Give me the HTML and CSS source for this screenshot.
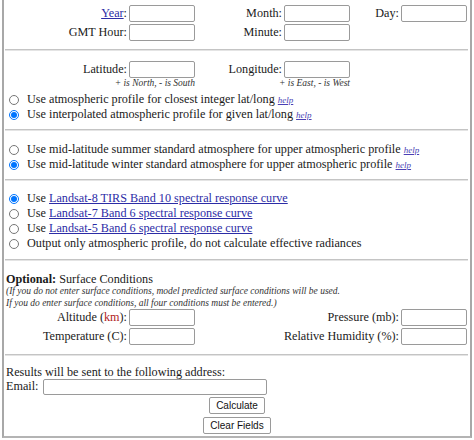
FILE: index.html
```html
<!DOCTYPE html>
<html>
<head>
<meta charset="utf-8">
<link rel="stylesheet" href="styles.css">
</head>
<body>
<div class="page">
  <section class="sec sec-time">
    <div class="grid6">
      <span class="lbl"><a class="lnk" href="#">Year</a>:</span><input class="txt" type="text">
      <span class="lbl">Month:</span><input class="txt" type="text">
      <span class="lbl">Day:</span><input class="txt" type="text">
      <span class="lbl">GMT Hour:</span><input class="txt" type="text">
      <span class="lbl">Minute:</span><input class="txt" type="text">
    </div>
  </section>
  <hr class="rule">
  <section class="sec sec-loc">
    <div class="grid6 loc-grid">
      <span class="lbl">Latitude:</span><input class="txt" type="text">
      <span class="lbl">Longitude:</span><input class="txt" type="text">
      <span class="hint hint-lat">+ is North, - is South</span>
      <span class="hint hint-lon">+ is East, - is West</span>
    </div>
    <div class="radios">
      <label class="opt"><input class="rad" type="radio" name="p"><span>Use atmospheric profile for closest integer lat/long <a class="help" href="#">help</a></span></label>
      <label class="opt"><input class="rad" type="radio" name="p" checked><span>Use interpolated atmospheric profile for given lat/long <a class="help" href="#">help</a></span></label>
    </div>
  </section>
  <hr class="rule">
  <section class="sec sec-atm">
    <div class="radios">
      <label class="opt"><input class="rad" type="radio" name="a"><span>Use mid-latitude summer standard atmosphere for upper atmospheric profile <a class="help" href="#">help</a></span></label>
      <label class="opt"><input class="rad" type="radio" name="a" checked><span>Use mid-latitude winter standard atmosphere for upper atmospheric profile <a class="help" href="#">help</a></span></label>
    </div>
  </section>
  <hr class="rule">
  <section class="sec sec-band">
    <div class="radios">
      <label class="opt"><input class="rad" type="radio" name="b" checked><span>Use <a class="lnk" href="#">Landsat-8 TIRS Band 10 spectral response curve</a></span></label>
      <label class="opt"><input class="rad" type="radio" name="b"><span>Use <a class="lnk" href="#">Landsat-7 Band 6 spectral response curve</a></span></label>
      <label class="opt"><input class="rad" type="radio" name="b"><span>Use <a class="lnk" href="#">Landsat-5 Band 6 spectral response curve</a></span></label>
      <label class="opt"><input class="rad" type="radio" name="b"><span>Output only atmospheric profile, do not calculate effective radiances</span></label>
    </div>
  </section>
  <hr class="rule">
  <section class="sec sec-surf">
    <div class="opt-title"><b>Optional:</b> Surface Conditions</div>
    <div class="note">(If you do not enter surface conditions, model predicted surface conditions will be used.</div>
    <div class="note">If you do enter surface conditions, all four conditions must be entered.)</div>
    <div class="grid6 surf-grid">
      <span class="lbl">Altitude (<span class="km">km</span>):</span><input class="txt" type="text">
      <span class="lbl span3">Pressure (mb):</span><input class="txt" type="text">
      <span class="lbl">Temperature (C):</span><input class="txt" type="text">
      <span class="lbl span3">Relative Humidity (%):</span><input class="txt" type="text">
    </div>
  </section>
  <hr class="rule">
  <section class="sec sec-send">
    <div class="send-line">Results will be sent to the following address:</div>
    <div class="email-row"><span>Email:</span><input class="txt email" type="text"></div>
    <div class="buttons">
      <button class="btn" type="button">Calculate</button>
      <button class="btn" type="button">Clear Fields</button>
    </div>
  </section>
</div>
</body>
</html>
```

FILE: styles.css
```css
html, body {
  margin: 0;
  padding: 0;
  background: #ffffff;
}
body {
  font-family: "Liberation Serif", "Times New Roman", serif;
  font-size: 12.2px;
  color: #1a1a1a;
}
.page {
  margin-left: 2px;
  width: 466px;
  border-left: 2px solid #a8a8a8;
  border-right: 2px solid #a8a8a8;
  border-bottom: 2px solid #b4b4b4;
}
.sec {
  padding: 0;
}
.rule {
  margin: 0 2px 0 1px;
  height: 0;
  border: 0;
  border-top: 1px solid #c4c4c4;
  border-bottom: 1px solid #e4e4e4;
}
.grid6 {
  display: grid;
  grid-template-columns: 125px 68px 87px 68px 49px 68px;
  grid-auto-rows: 17px;
  row-gap: 2px;
  align-items: center;
}
.lbl {
  text-align: right;
  padding-right: 2px;
  line-height: 17px;
  white-space: nowrap;
}
.span3 { grid-column: span 3; }
.txt {
  box-sizing: border-box;
  width: 66px;
  height: 17px;
  margin: 0;
  padding: 0 3px;
  border: 1px solid #9a9a9a;
  border-radius: 2px;
  background: #fff;
  font-size: 11px;
}
.lnk {
  color: #2c2ca6;
  text-decoration: underline;
}
.sec-time { padding: 5px 0 8px; }
.sec-loc { padding: 10px 0 7px; }
.loc-grid {
  grid-template-rows: 17px 11px;
  row-gap: 0;
}
.hint {
  font-style: italic;
  font-size: 9.5px;
  line-height: 11px;
  text-align: right;
  padding-right: 2px;
  color: #333;
  white-space: nowrap;
  grid-row: 2;
}
.hint-lat { grid-column: 1 / 3; }
.hint-lon { grid-column: 3 / 5; }
.radios {
  display: flex;
  flex-direction: column;
}
.sec-loc .radios { margin-top: 3px; }
.opt {
  display: flex;
  align-items: center;
  height: 15px;
  line-height: 15px;
  white-space: nowrap;
}
.rad {
  width: 10px;
  height: 10px;
  margin: 0 8px 0 5px;
  flex: none;
}
.help {
  font-style: italic;
  font-size: 9px;
  color: #4a3fb4;
  text-decoration: underline;
}
.sec-atm { padding: 11px 0 7px; }
.sec-band { padding: 10px 0 8px; }
.sec-surf { padding: 12px 0 9px 2px; }
.opt-title {
  line-height: 12px;
}
.note {
  font-style: italic;
  font-size: 9.5px;
  line-height: 12px;
  color: #333;
  white-space: nowrap;
}
.surf-grid {
  margin-top: 0;
  margin-left: -2px;
}
.km { color: #b01c1c; }
.sec-send { padding: 10px 0 2px 2px; }
.send-line { line-height: 12px; }
.email-row {
  display: flex;
  align-items: center;
  gap: 4px;
  height: 17px;
}
.email {
  width: 224px;
  height: 16px;
}
.buttons {
  display: flex;
  flex-direction: column;
  align-items: center;
  gap: 3px;
  margin-top: 2px;
  margin-left: -2px;
}
.btn {
  box-sizing: border-box;
  height: 17px;
  margin: 0;
  padding: 0 6px;
  font-family: "Liberation Sans", Arial, sans-serif;
  font-size: 10px;
  color: #111;
  background: #fff;
  border: 1px solid #9a9a9a;
  border-radius: 2px;
}
```
